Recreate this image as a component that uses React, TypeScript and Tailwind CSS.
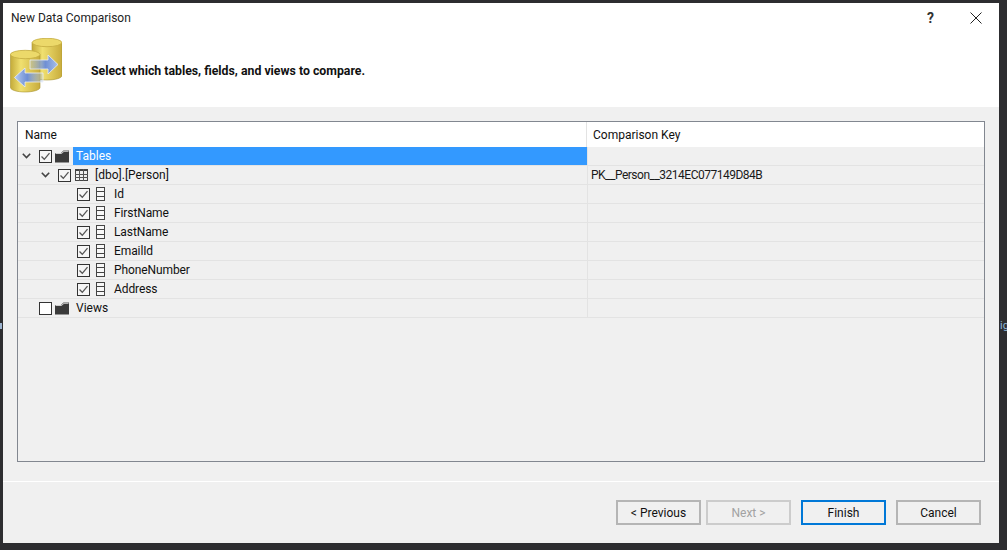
import { useId } from "react";

const font = "font-['Roboto','Noto_Sans',sans-serif]";

function DbIcon() {
  const id = useId();
  return (
    <svg width="52" height="56" viewBox="0 0 52 56" className="shrink-0">
      <defs>
        <linearGradient id={`${id}g`} x1="0" x2="1" y1="0" y2="0">
          <stop offset="0" stopColor="#c4ab3a" />
          <stop offset="0.35" stopColor="#f0e070" />
          <stop offset="1" stopColor="#c8ac3c" />
        </linearGradient>
        <linearGradient id={`${id}a`} x1="0" x2="1" y1="0" y2="0">
          <stop offset="0" stopColor="#a8c0e8" stopOpacity="0.3" />
          <stop offset="0.55" stopColor="#6f8fd4" />
          <stop offset="1" stopColor="#a8c0ec" />
        </linearGradient>
        <linearGradient id={`${id}b`} x1="1" x2="0" y1="0" y2="0">
          <stop offset="0" stopColor="#a8c0e8" stopOpacity="0.3" />
          <stop offset="0.55" stopColor="#6f8fd4" />
          <stop offset="1" stopColor="#b4caf0" />
        </linearGradient>
      </defs>
      <path d="M22 4.500v33c0 2.500 6.500 4.500 15 4.500s15-2 15-4.500v-33z" fill={`url(#${id}g)`} stroke="#a89430" strokeWidth="0.6" />
      <ellipse cx="37" cy="4.500" rx="14.800" ry="4.200" fill="#ecd96a" stroke="#c4ac40" strokeWidth="0.8" />
      <path d="M0.500 16.500v33c0 2.500 6.500 4.500 14.500 4.500s15-2 15-4.500v-33z" fill={`url(#${id}g)`} stroke="#a89430" strokeWidth="0.6" />
      <ellipse cx="15.200" cy="16.500" rx="14.800" ry="4.200" fill="#ecd96a" stroke="#c4ac40" strokeWidth="0.8" />
      <path d="M20 22h18v-5l10 9.500-10 9.500v-5h-18z" fill={`url(#${id}a)`} stroke="#e8eefa" strokeWidth="0.8" />
      <path d="M33 35h-18v-5l-10.500 9.500 10.500 9.500v-5h18z" fill={`url(#${id}b)`} stroke="#e8eefa" strokeWidth="0.8" />
    </svg>
  );
}

function Chevron() {
  return (
    <svg width="9" height="6" viewBox="0 0 9 6" className="shrink-0">
      <path d="M0.800 0.800L4.500 4.500L8.200 0.800" fill="none" stroke="#444" strokeWidth="1.600" />
    </svg>
  );
}

function CheckBox({ checked = true }: { checked?: boolean }) {
  return (
    <div className={`flex h-[13px] w-[13px] shrink-0 items-center justify-center border border-[#333] ${checked ? "bg-[#f6f6f6]" : "bg-white"}`}>
      {checked && (
        <svg width="11" height="11" viewBox="0 0 11 11">
          <path d="M1.500 5.500L4.300 8.300L9.500 2.200" fill="none" stroke="#555" strokeWidth="1.300" />
        </svg>
      )}
    </div>
  );
}

function FolderIcon() {
  return (
    <svg width="14" height="13" viewBox="0 0 14 13" className="ml-[3px] shrink-0">
      <path d="M0 3V12.500H14V0.500H8.500L6 3z" fill="#3a3a3a" />
      <path d="M0.500 3.500H6.500L9 1.300H13.500" fill="none" stroke="#f4f4f4" strokeWidth="0.800" />
    </svg>
  );
}

function TableIcon() {
  return (
    <svg width="13" height="12" viewBox="0 0 13 12" className="ml-[4px] shrink-0">
      <rect x="0.500" y="0.500" width="12" height="11" fill="none" stroke="#444" />
      <rect x="0" y="0" width="13" height="2" fill="#444" />
      <path d="M0 5.500H13M0 8.500H13M4.500 0V12M8.500 0V12" stroke="#555" />
    </svg>
  );
}

function ColumnIcon() {
  return (
    <svg width="9" height="14" viewBox="0 0 9 14" className="ml-[6px] shrink-0">
      <rect x="0.500" y="0.500" width="8" height="13" fill="#f8f8f8" stroke="#444" />
      <path d="M0 4.500H9M0 9.500H9" stroke="#444" />
    </svg>
  );
}

const columns = ["Id", "FirstName", "LastName", "EmailId", "PhoneNumber", "Address"];

function Row({ children, keyText = "" }: { children: React.ReactNode; keyText?: string }) {
  return (
    <div className="flex h-[19px] border-b border-[#e3e3e3]">
      <div className="flex w-[570px] shrink-0 items-center border-r border-[#e3e3e3]">{children}</div>
      <div className="pl-[3px] text-[12px] leading-[18px] tracking-[-0.5px] text-[#1a1a1a]">{keyText}</div>
    </div>
  );
}

function WizardButton({ label, className = "" }: { label: string; className?: string }) {
  return (
    <button className={`h-[25px] w-[85px] border-2 bg-[#f0f0f0] text-[12px] ${className}`}>
      {label}
    </button>
  );
}

export default function App() {
  return (
    <div className={`relative h-[550px] w-[1007px] overflow-hidden bg-[#2d2d30] pl-[3px] pt-[3px] text-[#111] ${font}`}>
      {/* 背後のウィンドウの切れ端 */}
      <div className="absolute left-0 top-[323px] h-[6px] w-[2px] bg-[#9db4d0]" />
      <span className="absolute left-[1000px] top-[318px] text-[11px] leading-[16px] text-[#8fb8d8]">ig</span>

      <div className="flex h-[540px] w-[996px] flex-col bg-[#f0f0f0]">
        {/* ヘッダー */}
        <div className="h-[104px] bg-white">
          <div className="flex h-[30px] items-center justify-between pl-[8px] pr-[17px]">
            <span className="text-[12px] text-[#222]">New Data Comparison</span>
            <div className="flex items-center gap-[36px]">
              <span className="text-[14px] font-bold text-[#333]">?</span>
              <svg width="12" height="12" viewBox="0 0 12 12">
                <path d="M0.500 0.500L11.500 11.500M11.500 0.500L0.500 11.500" stroke="#222" />
              </svg>
            </div>
          </div>
          <div className="mt-[5px] flex items-start pl-[7px]">
            <DbIcon />
            <span className="ml-[29px] mt-[24px] text-[12.3px] font-bold">
              Select which tables, fields, and views to compare.
            </span>
          </div>
        </div>

        {/* ツリー */}
        <div className="mx-[14px] mt-[14px] h-[341px] border border-[#828790] bg-[#f0f0f0]">
          <div className="flex h-[25px] bg-white text-[12px]">
            <div className="flex w-[569px] items-center border-r border-[#e3e3e3] pl-[7px]">Name</div>
            <div className="flex items-center pl-[6px]">Comparison Key</div>
          </div>
          <Row>
            <div className="ml-[4px] w-[17px]"><Chevron /></div>
            <CheckBox />
            <FolderIcon />
            <span className="ml-[4px] flex h-full flex-1 items-center bg-[#3399ff] pl-[3px] text-[12px] text-white">Tables</span>
          </Row>
          <Row keyText="PK__Person__3214EC077149D84B">
            <div className="ml-[23px] w-[17px]"><Chevron /></div>
            <CheckBox />
            <TableIcon />
            <span className="ml-[7px] text-[12px]">[dbo].[Person]</span>
          </Row>
          {columns.map((name) => (
            <Row key={name}>
              <div className="ml-[59px]"><CheckBox /></div>
              <ColumnIcon />
              <span className="ml-[9px] text-[12px] tracking-[-0.1px]">{name}</span>
            </Row>
          ))}
          <Row>
            <div className="ml-[21px]"><CheckBox checked={false} /></div>
            <FolderIcon />
            <span className="ml-[7px] text-[12px]">Views</span>
          </Row>
        </div>

        {/* フッター */}
        <div className="mt-[19px] flex flex-1 gap-[5px] border-t border-white pl-[613px] pt-[18px]">
          <WizardButton label="< Previous" className="border-[#b5b5b5]" />
          <WizardButton label="Next >" className="border-[#cccccc] text-[#a2a2a2]" />
          <WizardButton label="Finish" className="ml-[5px] border-[#0078d7]" />
          <WizardButton label="Cancel" className="ml-[5px] border-[#b5b5b5]" />
        </div>
      </div>
    </div>
  );
}
